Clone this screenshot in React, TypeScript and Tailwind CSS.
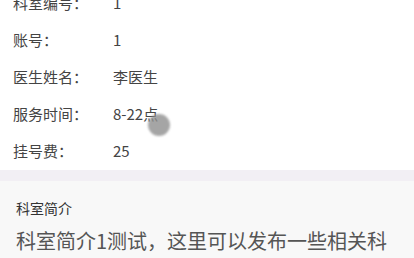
const rows = [
  { label: "科室编号：", value: "1" },
  { label: "账号：", value: "1" },
  { label: "医生姓名：", value: "李医生" },
  { label: "服务时间：", value: "8-22点" },
  { label: "挂号费：", value: "25" },
];

export default function App() {
  return (
    <div
      className="relative h-[258px] w-[414px] overflow-hidden bg-white"
      style={{ fontFamily: '"Noto Sans CJK SC", "Noto Sans", sans-serif' }}
    >
      {/* info rows */}
      <div className="mt-[-15px] flex flex-col">
        {rows.map((r) => (
          <div key={r.label} className="flex h-[37px] items-center text-[15px] text-[#444]">
            <span className="w-[113px] shrink-0 pl-[13px]">{r.label}</span>
            <span>{r.value}</span>
          </div>
        ))}
      </div>

      {/* divider band */}
      <div className="h-[11px] bg-[#f2eff4]" />

      {/* intro */}
      <div className="h-full bg-[#f8f8f8] px-[16px] pt-[17px]">
        <div className="text-[14px] leading-[20px] text-[#333]">科室简介</div>
        <div className="mt-[5px] text-[20px] leading-[36px] text-[#555]">
          科室简介1测试，这里可以发布一些相关科室的介绍
        </div>
      </div>

      {/* touch indicator */}
      <div className="pointer-events-none absolute left-[148px] top-[114px] h-[22px] w-[22px] rounded-full bg-[#8f8f8f] opacity-80 blur-[1px]" />
    </div>
  );
}
